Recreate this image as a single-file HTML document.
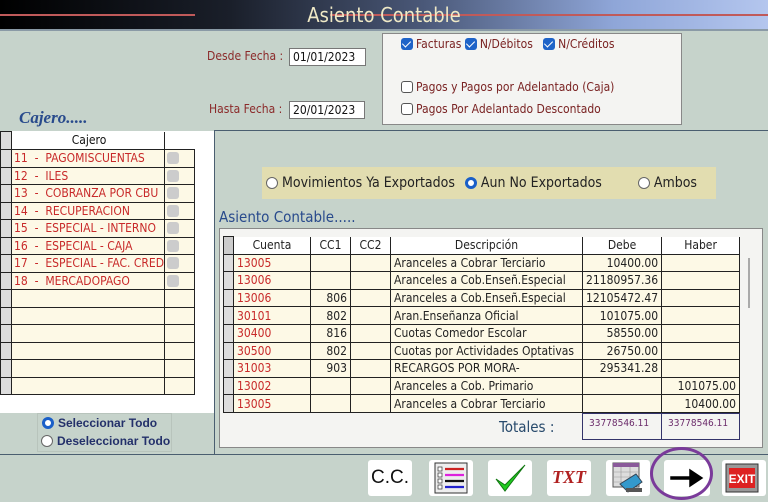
<!DOCTYPE html>
<html><head><meta charset="utf-8"><style>
*{margin:0;padding:0;box-sizing:border-box}
body{width:768px;height:502px;background:#c6d3cb;position:relative;overflow:hidden;font-family:"DejaVu Sans Condensed","Liberation Sans",sans-serif}
.a{position:absolute}
.title{left:0;top:0;width:768px;height:31px;background:linear-gradient(90deg,#000 0%,#1a1f2a 30%,#4a5878 55%,#8fa6d8 80%,#b4c6ee 100%);border-bottom:2px solid #8a9aa6}
.rl{height:2px;background:#c05a5a;top:14px}
.tt{left:0;width:768px;top:3px;text-align:center;color:#efe9c6;font-size:20px}
.lbl{color:#8b2a2a;font-size:12px}
.inp{background:#fff;border:1px solid #777;font-size:12px;padding:1px 3px;color:#111}
.cb{display:inline-block;width:12px;height:12px;border-radius:3px;vertical-align:-2px;margin-right:3px}
.on{background:#1e63c8;position:relative}
.on:after{content:"";position:absolute;left:3px;top:1px;width:4px;height:7px;border:solid #fff;border-width:0 1.5px 1.5px 0;transform:rotate(45deg)}
.off{border:1px solid #555;background:#fff}
.chk{color:#7a2323;font-size:12px}
table{border-collapse:collapse}
.lg td{height:17.5px;border:1px solid #222;background:#fdf9e6;font-size:12px;color:#c82a2a;padding-left:2px;white-space:nowrap;overflow:hidden}
.rg td{height:17.6px;border:1px solid #222;background:#fdf9e6;font-size:12px;color:#222;padding:0 3px;white-space:nowrap;overflow:hidden}
.rad{display:inline-block;width:12px;height:12px;border-radius:50%;border:1px solid #666;background:#fff;vertical-align:-2px;margin-right:4px}
.rad.s{border:3px solid #1a5fc8;background:#fff}
.btn{background:#fff;border-radius:3px;height:36px;top:460px;width:44px}
</style></head><body>
<div class="a title"></div>
<div class="a rl" style="left:0;width:195px"></div>
<div class="a rl" style="left:330px;width:438px"></div>
<div class="a tt">Asiento Contable</div>

<div class="a lbl" style="left:207px;top:49px">Desde Fecha :</div>
<div class="a inp" style="left:289px;top:48px;width:77px;height:18px">01/01/2023</div>
<div class="a lbl" style="left:209px;top:102px">Hasta Fecha :</div>
<div class="a inp" style="left:289px;top:101px;width:76px;height:18px">20/01/2023</div>

<div class="a" style="left:382px;top:33px;width:300px;height:92px;background:#f4f4f2;border:1px solid #888"></div>
<div class="a chk" style="left:401px;top:37px"><span class="cb on"></span>Facturas <span class="cb on"></span>N/Débitos &nbsp;&nbsp;<span class="cb on"></span>N/Créditos</div>
<div class="a chk" style="left:401px;top:80px"><span class="cb off"></span>Pagos y Pagos por Adelantado (Caja)</div>
<div class="a chk" style="left:401px;top:102px"><span class="cb off"></span>Pagos Por Adelantado Descontado</div>

<div class="a" style="left:19px;top:108px;font:italic bold 17px 'Liberation Serif',serif;color:#284a8c">Cajero.....</div>

<div class="a" style="left:0;top:131px;width:214px;height:282px;background:#fff"></div>
<table class="a lg" style="left:0;top:131px;width:195px">
<tr><td style="width:11px;background:#ddd;height:18px"></td><td style="width:153px;background:#fff;color:#111;text-align:center;border:none;border-left:1px solid #222">Cajero</td><td style="background:#fff;border:none;border-left:1px solid #222"></td></tr>
<tr><td style="background:#ddd"></td><td>11 &nbsp;- &nbsp;PAGOMISCUENTAS</td><td><span class="cb" style="background:#ccc;width:12px;height:12px"></span></td></tr>
<tr><td style="background:#ddd"></td><td>12 &nbsp;- &nbsp;ILES</td><td><span class="cb" style="background:#ccc"></span></td></tr>
<tr><td style="background:#ddd"></td><td>13 &nbsp;- &nbsp;COBRANZA POR CBU</td><td><span class="cb" style="background:#ccc"></span></td></tr>
<tr><td style="background:#ddd"></td><td>14 &nbsp;- &nbsp;RECUPERACION</td><td><span class="cb" style="background:#ccc"></span></td></tr>
<tr><td style="background:#ddd"></td><td>15 &nbsp;- &nbsp;ESPECIAL - INTERNO</td><td><span class="cb" style="background:#ccc"></span></td></tr>
<tr><td style="background:#ddd"></td><td>16 &nbsp;- &nbsp;ESPECIAL - CAJA</td><td><span class="cb" style="background:#ccc"></span></td></tr>
<tr><td style="background:#ddd"></td><td>17 &nbsp;- &nbsp;ESPECIAL - FAC. CRED</td><td><span class="cb" style="background:#ccc"></span></td></tr>
<tr><td style="background:#ddd"></td><td>18 &nbsp;- &nbsp;MERCADOPAGO</td><td><span class="cb" style="background:#ccc"></span></td></tr>
<tr><td style="background:#ddd"></td><td></td><td></td></tr>
<tr><td style="background:#ddd"></td><td></td><td></td></tr>
<tr><td style="background:#ddd"></td><td></td><td></td></tr>
<tr><td style="background:#ddd"></td><td></td><td></td></tr>
<tr><td style="background:#ddd"></td><td></td><td></td></tr>
<tr><td style="background:#ddd"></td><td></td><td></td></tr>
</table>
<div class="a" style="left:37px;top:413px;width:135px;height:39px;border:1px solid #b8c4bc;font:bold 12px 'Liberation Sans',sans-serif;color:#23306a">
<div style="margin:2px 0 0 4px"><span class="rad s"></span>Seleccionar Todo</div>
<div style="margin:4px 0 0 3px"><span class="rad"></span>Deseleccionar Todo</div></div>
<div class="a" style="left:214px;top:130px;width:1px;height:325px;background:#4a5e70"></div>
<div class="a" style="left:214px;top:130px;width:554px;height:1px;background:#4a5e70"></div>
<div class="a" style="left:0;top:454px;width:768px;height:1px;background:#4a5e70"></div>

<div class="a" style="left:262px;top:167px;width:454px;height:32px;background:#e2ddb0;font-size:14px;color:#222;padding-top:8px;white-space:nowrap">
<span style="margin-left:4px"><span class="rad"></span>Movimientos Ya Exportados</span><span style="margin-left:10px"><span class="rad s"></span>Aun No Exportados</span><span style="margin-left:36px"><span class="rad"></span>Ambos</span></div>
<div class="a" style="left:219px;top:208px;font-size:15px;color:#284a8c">Asiento Contable.....</div>

<div class="a" style="left:219px;top:228px;width:544px;height:220px;background:#f4f4f2;border:1px solid #888"></div>
<div class="a" style="left:748px;top:258px;width:2px;height:50px;background:#aaa"></div>
<table class="a rg" style="left:223px;top:236px;width:517px">
<tr style="text-align:center"><td style="width:10px;background:#ccc;height:17px"></td><td style="width:77px;background:#fff;border-top:none">Cuenta</td><td style="width:40px;background:#fff;border-top:none">CC1</td><td style="width:40px;background:#fff;border-top:none">CC2</td><td style="width:192px;background:#fff;border-top:none">Descripción</td><td style="width:79px;background:#fff;border-top:none">Debe</td><td style="background:#fff;border-top:none">Haber</td></tr>
<tr><td style="background:#ddd"></td><td style="color:#c82a2a">13005</td><td></td><td></td><td>Aranceles a Cobrar Terciario</td><td align=right>10400.00</td><td></td></tr>
<tr><td style="background:#ddd"></td><td style="color:#c82a2a">13006</td><td></td><td></td><td>Aranceles a Cob.Enseñ.Especial</td><td align=right>21180957.36</td><td></td></tr>
<tr><td style="background:#ddd"></td><td style="color:#c82a2a">13006</td><td align=right>806</td><td></td><td>Aranceles a Cob.Enseñ.Especial</td><td align=right>12105472.47</td><td></td></tr>
<tr><td style="background:#ddd"></td><td style="color:#c82a2a">30101</td><td align=right>802</td><td></td><td>Aran.Enseñanza Oficial</td><td align=right>101075.00</td><td></td></tr>
<tr><td style="background:#ddd"></td><td style="color:#c82a2a">30400</td><td align=right>816</td><td></td><td>Cuotas Comedor Escolar</td><td align=right>58550.00</td><td></td></tr>
<tr><td style="background:#ddd"></td><td style="color:#c82a2a">30500</td><td align=right>802</td><td></td><td>Cuotas por Actividades Optativas</td><td align=right>26750.00</td><td></td></tr>
<tr><td style="background:#ddd"></td><td style="color:#c82a2a">31003</td><td align=right>903</td><td></td><td>RECARGOS POR MORA-</td><td align=right>295341.28</td><td></td></tr>
<tr><td style="background:#ddd"></td><td style="color:#c82a2a">13002</td><td></td><td></td><td>Aranceles a Cob. Primario</td><td></td><td align=right>101075.00</td></tr>
<tr><td style="background:#ddd"></td><td style="color:#c82a2a">13005</td><td></td><td></td><td>Aranceles a Cobrar Terciario</td><td></td><td align=right>10400.00</td></tr>
</table>
<div class="a" style="left:499px;top:418px;font-size:15px;color:#284a6c">Totales :</div>
<div class="a" style="left:582px;top:413px;width:158px;height:27px;border:1px solid #33336a;font:10px 'DejaVu Sans Condensed',sans-serif;color:#6a2a6a">
<div class="a" style="left:78px;top:0;width:1px;height:25px;background:#33336a"></div>
<span class="a" style="left:6px;top:4px">33778546.11</span><span class="a" style="left:85px;top:4px">33778546.11</span></div>

<div class="a btn" style="left:368px;font:19px 'Liberation Sans',sans-serif;color:#111;text-align:center;line-height:36px">C.C.</div>
<div class="a btn" style="left:429px"><svg width="44" height="36"><rect x="6" y="3" width="32" height="30" fill="#eee" stroke="#333"/>
<g stroke-width="2.2"><line x1="16" y1="9" x2="35" y2="9" stroke="#c22"/><line x1="16" y1="15" x2="35" y2="15" stroke="#d2d"/><line x1="16" y1="21" x2="35" y2="21" stroke="#111"/><line x1="16" y1="27" x2="35" y2="27" stroke="#22c"/></g>
<g fill="#fff" stroke="#333" stroke-width=".7"><rect x="9" y="7" width="4" height="4"/><rect x="9" y="13" width="4" height="4"/><rect x="9" y="19" width="4" height="4"/><rect x="9" y="25" width="4" height="4"/></g></svg></div>
<div class="a btn" style="left:488px"><svg width="44" height="36"><path d="M8 19 L17 31 L37 5 L17 25 Z" fill="#2c2" stroke="#171" stroke-width="1"/></svg></div>
<div class="a btn" style="left:547px;font:italic bold 18px 'Liberation Serif',serif;color:#b02020;text-align:center;line-height:34px">TXT</div>
<div class="a btn" style="left:606px"><svg width="44" height="36"><rect x="7" y="3" width="26" height="24" fill="#ddd" stroke="#555"/><rect x="7" y="3" width="26" height="4" fill="#8a5a9a"/><g stroke="#999" stroke-width=".6"><line x1="7" y1="12" x2="33" y2="12"/><line x1="7" y1="17" x2="33" y2="17"/><line x1="7" y1="22" x2="33" y2="22"/><line x1="15" y1="7" x2="15" y2="27"/><line x1="24" y1="7" x2="24" y2="27"/></g><path d="M14 24 L30 14 L36 22 L22 32 Z" fill="#39c" stroke="#345"/><rect x="20" y="28" width="16" height="4" fill="#555"/></svg></div>
<div class="a btn" style="left:664px;width:46px"><svg width="46" height="36"><path d="M7 17 L26 17 L26 10 L38 18 L26 26 L26 19 L7 19 Z" fill="#000" stroke="#000" stroke-width="1.5"/></svg></div>
<div class="a" style="left:650px;top:447px;width:63px;height:53px;border:3px solid #7a3a9a;border-radius:50%"></div>
<div class="a btn" style="left:722px"><svg width="44" height="36"><rect x="4" y="4" width="32" height="28" fill="#999" stroke="#333"/><rect x="7" y="8" width="26" height="20" fill="#d22"/><text x="20" y="23" font-family="Liberation Sans" font-weight="bold" font-size="12" fill="#fff" text-anchor="middle">EXIT</text></svg></div>
</body></html>
